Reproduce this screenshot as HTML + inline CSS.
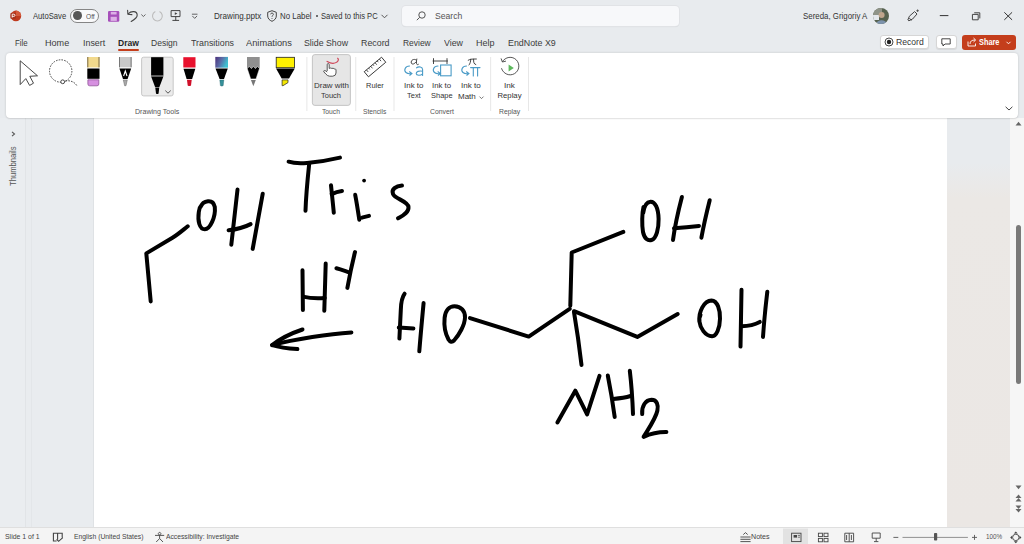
<!DOCTYPE html>
<html><head><meta charset="utf-8">
<style>
*{box-sizing:border-box;margin:0;padding:0}
html,body{width:1024px;height:544px;overflow:hidden;background:#e8ebee;font-family:"Liberation Sans",sans-serif;color:#262626}
.a{position:absolute;white-space:nowrap}
svg{position:absolute;overflow:visible}
</style></head><body>
<div class="a" style="left:0;top:0;width:1024px;height:52px;background:#e8ebee"></div>
<svg style="left:0;top:0" width="30" height="30" viewBox="0 0 30 30">
<circle cx="15.9" cy="15.9" r="5.3" fill="#bf3a1e"/>
<path d="M15.9 10.6 A5.3 5.3 0 0 1 21.2 15.9 L15.9 15.9Z" fill="#d45a3a"/>
<rect x="10.4" y="13" width="5.6" height="5.8" rx="0.8" fill="#a8321a"/>
<path d="M12.2 17.6 V14.2 H13.8 Q15 14.2 15 15.3 Q15 16.4 13.8 16.4 H12.2" fill="none" stroke="#fff" stroke-width="0.9"/>
</svg>
<div class="a" style="left:32.80px;top:12px;font-size:8.57px;line-height:1;color:#333;font-weight:400;transform:scaleX(0.893);transform-origin:0 0;">AutoSave</div>
<div class="a" style="left:70.4px;top:8.9px;width:28.5px;height:13.8px;border:1px solid #858585;border-radius:7px;background:#f9f9fa"></div>
<div class="a" style="left:73px;top:11.3px;width:8.8px;height:8.8px;border-radius:50%;background:#575757"></div>
<div class="a" style="left:85.80px;top:13px;font-size:7.86px;line-height:1;color:#555;font-weight:400;transform:scaleX(0.841);transform-origin:0 0;">Off</div>
<svg style="left:107.7px;top:10.7px" width="11.3" height="10.8" viewBox="0 0 11.3 10.8">
<rect x="0" y="0" width="11.3" height="10.8" rx="1.2" fill="#a64fba"/>
<rect x="2.8" y="0.9" width="5.8" height="2.6" fill="#dcb0e6"/>
<rect x="2.6" y="5.8" width="6.2" height="4.1" fill="#dcb0e6"/>
</svg>
<svg style="left:0;top:0" width="210" height="30" viewBox="0 0 210 30" fill="none" stroke-linecap="round" stroke-linejoin="round">
<path d="M128.2 13.8 C131 10.8 137 10.6 137.2 15 C137.3 17.6 134.5 19.6 131.2 21.4" stroke="#444" stroke-width="1.1"/>
<path d="M127.6 10.2 L127.9 14.3 L131.9 14.6" stroke="#444" stroke-width="1.1"/>
<path d="M141.6 14.8 L143.4 16.5 L145.2 14.8" stroke="#555" stroke-width="0.9"/>
<path d="M155 11.8 A4.9 4.9 0 1 0 159.8 11.8" stroke="#bdbdbd" stroke-width="1.1"/>
<path d="M171.5 10.6 H180 V16.6 H171.5 Z M175.75 16.6 V20.3 M172.8 20.4 H178.7" stroke="#444" stroke-width="1"/>
<path d="M174.8 12.2 L177.4 13.6 L174.8 15 Z" fill="#444" stroke="none"/>
<path d="M192.3 14.2 H197.1 M192.6 16.2 L194.7 18.4 L196.8 16.2" stroke="#555" stroke-width="0.9"/>
</svg>
<div class="a" style="left:213.70px;top:12px;font-size:8.43px;line-height:1;color:#333;font-weight:400;transform:scaleX(0.961);transform-origin:0 0;">Drawing.pptx</div>
<svg style="left:266.5px;top:9.5px" width="10" height="12" viewBox="0 0 10 12" fill="none" stroke="#444" stroke-width="1">
<path d="M5 0.7 L9.3 2.3 V6 C9.3 8.6 7.4 10.3 5 11.3 C2.6 10.3 0.7 8.6 0.7 6 V2.3Z"/><path d="M3.6 4.3 C3.6 2.6 6.4 2.6 6.4 4.3 C6.4 5.4 5 5.4 5 6.8" stroke-width="0.9"/><circle cx="5" cy="8.4" r="0.5" fill="#444" stroke="none"/></svg>
<div class="a" style="left:279.70px;top:12px;font-size:8.43px;line-height:1;color:#333;font-weight:400;transform:scaleX(0.936);transform-origin:0 0;">No Label</div>
<div class="a" style="left:315.5px;top:15px;width:2px;height:2px;border-radius:1px;background:#444"></div>
<div class="a" style="left:321.00px;top:12px;font-size:8.43px;line-height:1;color:#333;font-weight:400;transform:scaleX(0.903);transform-origin:0 0;">Saved to this PC</div>
<svg style="left:380.5px;top:13.5px" width="7" height="5" viewBox="0 0 7 5" fill="none" stroke="#555" stroke-width="1"><path d="M0.5 0.8 L3.5 3.8 L6.5 0.8"/></svg>
<div class="a" style="left:402px;top:6px;width:276.5px;height:20px;background:#f7f8fa;border-radius:4px;box-shadow:0 0 0 1px #e1e3e6, 0 1px 1px rgba(0,0,0,0.10)"></div>
<svg style="left:416px;top:10.5px" width="10" height="10" viewBox="0 0 10 10" fill="none" stroke="#555" stroke-width="1"><circle cx="6" cy="4" r="3.2"/><path d="M3.7 6.3 L0.8 9.2"/></svg>
<div class="a" style="left:434.50px;top:12px;font-size:8.57px;line-height:1;color:#555;font-weight:400;transform:scaleX(1.005);transform-origin:0 0;">Search</div>
<div class="a" style="left:803.30px;top:12px;font-size:8.43px;line-height:1;color:#333;font-weight:400;transform:scaleX(0.935);transform-origin:0 0;">Sereda, Grigoriy A</div>
<svg style="left:872.8px;top:7.5px" width="16" height="16" viewBox="0 0 16 16">
<defs><clipPath id="av"><circle cx="8" cy="8" r="8"/></clipPath></defs>
<g clip-path="url(#av)"><rect width="16" height="16" fill="#56624f"/><rect x="0" y="0" width="9" height="9" fill="#8f9488"/><rect x="0" y="7" width="6" height="5" fill="#e4e8ec"/><circle cx="8.6" cy="7" r="3" fill="#bfa58c"/><path d="M3 16 C4 11 13 11 14 16Z" fill="#7d93ad"/></g></svg>
<svg style="left:0;top:0" width="1024" height="30" viewBox="0 0 1024 30" fill="none" stroke-linecap="round" stroke-linejoin="round">
<path d="M908 19.6 L909.4 16.2 L914.6 11.6 L917 14 L912.6 19 L909.2 20.6 Z M909.6 18.6 L911.4 20" stroke="#444" stroke-width="1"/>
<path d="M917.6 9.8 V11.6 M916.7 10.7 H918.5" stroke="#444" stroke-width="0.8"/>
<path d="M940.2 15.6 H948" stroke="#333" stroke-width="1"/>
<path d="M972.8 14.4 H978.2 V19.8 H972.8 Z" stroke="#444" stroke-width="1"/>
<path d="M974.6 12.8 H979.8 V18" stroke="#444" stroke-width="1"/>
<path d="M1004.6 12.6 L1011.8 19.6 M1011.8 12.6 L1004.6 19.6" stroke="#333" stroke-width="1"/>
</svg>
<div class="a" style="left:14.60px;top:39px;font-size:9.00px;line-height:1;color:#3b3b3b;font-weight:400;transform:scaleX(0.876);transform-origin:0 0;">File</div>
<div class="a" style="left:45.00px;top:39px;font-size:9.00px;line-height:1;color:#3b3b3b;font-weight:400;transform:scaleX(1.008);transform-origin:0 0;">Home</div>
<div class="a" style="left:82.50px;top:39px;font-size:9.00px;line-height:1;color:#3b3b3b;font-weight:400;transform:scaleX(0.986);transform-origin:0 0;">Insert</div>
<div class="a" style="left:151.40px;top:39px;font-size:9.00px;line-height:1;color:#3b3b3b;font-weight:400;transform:scaleX(0.949);transform-origin:0 0;">Design</div>
<div class="a" style="left:191.30px;top:39px;font-size:9.00px;line-height:1;color:#3b3b3b;font-weight:400;transform:scaleX(0.984);transform-origin:0 0;">Transitions</div>
<div class="a" style="left:246.40px;top:39px;font-size:9.00px;line-height:1;color:#3b3b3b;font-weight:400;transform:scaleX(1.031);transform-origin:0 0;">Animations</div>
<div class="a" style="left:304.40px;top:39px;font-size:9.00px;line-height:1;color:#3b3b3b;font-weight:400;transform:scaleX(0.977);transform-origin:0 0;">Slide Show</div>
<div class="a" style="left:361.00px;top:39px;font-size:9.00px;line-height:1;color:#3b3b3b;font-weight:400;transform:scaleX(0.982);transform-origin:0 0;">Record</div>
<div class="a" style="left:402.80px;top:39px;font-size:9.00px;line-height:1;color:#3b3b3b;font-weight:400;transform:scaleX(0.939);transform-origin:0 0;">Review</div>
<div class="a" style="left:443.80px;top:39px;font-size:9.00px;line-height:1;color:#3b3b3b;font-weight:400;transform:scaleX(0.982);transform-origin:0 0;">View</div>
<div class="a" style="left:475.50px;top:39px;font-size:9.00px;line-height:1;color:#3b3b3b;font-weight:400;transform:scaleX(0.999);transform-origin:0 0;">Help</div>
<div class="a" style="left:507.70px;top:39px;font-size:9.00px;line-height:1;color:#3b3b3b;font-weight:400;transform:scaleX(0.985);transform-origin:0 0;">EndNote X9</div>
<div class="a" style="left:117.80px;top:39px;font-size:9.00px;line-height:1;color:#262626;font-weight:700;transform:scaleX(0.950);transform-origin:0 0;">Draw</div>
<div class="a" style="left:117.5px;top:48.5px;width:21.5px;height:2px;background:#c43e1c;border-radius:1px"></div>
<div class="a" style="left:880px;top:35px;width:49px;height:13.5px;background:#fff;border:1px solid #d6d6d6;border-radius:3px;box-shadow:0 1px 1px rgba(0,0,0,0.08)"></div>
<svg style="left:884px;top:37px" width="10" height="10" viewBox="0 0 10 10"><circle cx="5" cy="5" r="4" fill="none" stroke="#333" stroke-width="0.9"/><circle cx="5" cy="5" r="2.2" fill="#222"/></svg>
<div class="a" style="left:895.60px;top:38px;font-size:8.86px;line-height:1;color:#333;font-weight:400;transform:scaleX(0.973);transform-origin:0 0;">Record</div>
<div class="a" style="left:935.5px;top:35px;width:21px;height:13.5px;background:#fff;border:1px solid #d6d6d6;border-radius:3px;box-shadow:0 1px 1px rgba(0,0,0,0.08)"></div>
<svg style="left:941px;top:37.5px" width="10" height="9" viewBox="0 0 10 9" fill="none" stroke="#333" stroke-width="0.9"><path d="M0.8 0.8 H9.2 V6 H4 L2 8 V6 H0.8Z"/></svg>
<div class="a" style="left:962px;top:34.5px;width:54px;height:15px;background:#c43e1c;border-radius:3px"></div>
<svg style="left:966.5px;top:37px" width="10" height="10" viewBox="0 0 10 10" fill="none" stroke="#fff" stroke-width="0.9"><path d="M1 4.5 V9 H8.5 V6.5"/><path d="M3 7 C3 4 5 3 8 3"/><path d="M6.5 1 L8.7 3 L6.5 5"/></svg>
<div class="a" style="left:978.50px;top:38px;font-size:8.86px;line-height:1;color:#fff;font-weight:700;transform:scaleX(0.832);transform-origin:0 0;">Share</div>
<svg style="left:1006px;top:40.5px" width="5" height="4" viewBox="0 0 5 4" fill="none" stroke="#fff" stroke-width="0.9"><path d="M0.5 0.8 L2.5 2.8 L4.5 0.8"/></svg>
<div class="a" style="left:0;top:118px;width:26px;height:410px;background:#eaedf0"></div>
<div class="a" style="left:25px;top:118px;width:1px;height:410px;background:#e1e4e7"></div>
<div class="a" style="left:26px;top:118px;width:68px;height:410px;background:#e9ecef"></div>
<div class="a" style="left:31px;top:118px;width:1px;height:410px;background:#e3e6e9"></div>
<div class="a" style="left:93px;top:118px;width:1px;height:410px;background:#dfe2e5"></div>
<svg style="left:10.5px;top:130.5px" width="5" height="6" viewBox="0 0 5 6" fill="none" stroke="#555" stroke-width="1.1"><path d="M1 0.8 L3.5 3 L1 5.2"/></svg>
<div class="a" style="left:9.9px;top:185.6px;font-size:8.2px;line-height:1;color:#555;transform:rotate(-90deg) scaleX(0.934);transform-origin:0 0">Thumbnails</div>
<div class="a" style="left:94px;top:118px;width:853px;height:410px;background:#fff"></div>
<div class="a" style="left:947px;top:118px;width:63px;height:410px;background:linear-gradient(#e8ebee 0px,#e8ebee 45px,#ebe8e5 80px,#ebe7e4 410px)"></div>
<div class="a" style="left:1010px;top:118px;width:14px;height:410px;background:#f6f6f6"></div>
<div class="a" style="left:1015.5px;top:225px;width:5.5px;height:159px;background:#7a7a7a;border-radius:3px"></div>
<svg style="left:1015px;top:121px" width="7" height="5" viewBox="0 0 7 5"><path d="M0.5 4.5 L3.5 0.8 L6.5 4.5Z" fill="#666"/></svg>
<svg style="left:1015px;top:485px" width="7" height="5" viewBox="0 0 7 5"><path d="M0.5 0.5 L3.5 4.2 L6.5 0.5Z" fill="#666"/></svg>
<svg style="left:1015px;top:494px" width="7" height="8" viewBox="0 0 7 8" fill="#666"><path d="M0.5 4 L3.5 0.5 L6.5 4Z"/><path d="M0.5 7.5 L3.5 4 L6.5 7.5Z"/></svg>
<svg style="left:1015px;top:505px" width="7" height="8" viewBox="0 0 7 8" fill="#666"><path d="M0.5 0.5 L3.5 4 L6.5 0.5Z"/><path d="M0.5 4 L3.5 7.5 L6.5 4Z"/></svg>
<div class="a" style="left:6px;top:52.5px;width:1012px;height:65px;background:#fff;border-radius:4px;box-shadow:0 0 2.5px rgba(0,0,0,0.16), 0 1px 1px rgba(0,0,0,0.06)"></div>
<svg style="left:0;top:0" width="1024" height="120" viewBox="0 0 1024 120">
<path d="M20.2 60.8 L37.5 75.8 L29.8 76.3 L33.5 83.2 L29.6 85.4 L25.8 78.6 L20.2 84.6 Z" fill="#fff" stroke="#333" stroke-width="0.9" stroke-linejoin="miter"/>
<circle cx="60.7" cy="71" r="11.2" fill="none" stroke="#333" stroke-width="0.9" stroke-dasharray="1.6 1.2"/>
<circle cx="62.7" cy="81.8" r="1.9" fill="#fff" stroke="#333" stroke-width="0.9"/>
<path d="M65.5 81 C70 80 75 82 77 86" fill="none" stroke="#333" stroke-width="0.9" stroke-dasharray="1.6 1.2"/>
<!-- eraser -->
<rect x="87.3" y="57" width="12.2" height="10.4" fill="#f2d98c"/>
<rect x="87.3" y="57" width="1" height="10.4" fill="#7a6a45"/><rect x="98.5" y="57" width="1" height="10.4" fill="#7a6a45"/>
<rect x="87.3" y="68.5" width="12.2" height="10.3" fill="#000"/>
<path d="M87.9 79.8 H98.8 V84 Q98.8 85.8 97 85.8 H89.7 Q87.9 85.8 87.9 84 Z" fill="#d690e0" stroke="#8f5498" stroke-width="0.8"/>
<!-- gray A pen -->
<rect x="119" y="57" width="12.6" height="10.3" fill="#c9c9c9"/>
<rect x="119" y="57" width="1" height="10.3" fill="#777"/><rect x="130.6" y="57" width="1" height="10.3" fill="#777"/>
<path d="M119.4 68.5 H131.2 L127.6 79.1 H123 Z" fill="#000"/>
<path d="M123.6 76 L125.3 71 L127 76" fill="none" stroke="#fff" stroke-width="1.1"/>
<path d="M123.3 79.9 H127.3 L126 85.7 H124.6 Z" fill="#a8a8a8" stroke="#666" stroke-width="0.5"/>
<!-- selected pen button -->
<rect x="141.6" y="57.2" width="31.6" height="38.7" rx="2" fill="#ebebeb" stroke="#c2c2c2" stroke-width="0.9"/>
<rect x="151.1" y="57.2" width="12.3" height="18.5" fill="#000"/>
<rect x="151.1" y="75.7" width="12.3" height="0.8" fill="#999"/>
<path d="M151.1 76.6 H163.4 L159.2 87.4 H155.3 Z" fill="#000"/>
<path d="M155.3 88 H159.2 L158.6 93.6 Q157.3 94.6 156 93.6 Z" fill="#000"/>
<path d="M165.3 90.6 L168 93.2 L170.7 90.6" fill="none" stroke="#444" stroke-width="0.9"/>
<!-- red pen -->
<rect x="183.3" y="57.2" width="12.2" height="10.3" fill="#e8112d"/>
<path d="M183.5 68.8 H195.3 L192.1 79 H186.6 Z" fill="#000"/>
<path d="M187 79.8 H191.7 L191 85.4 Q189.3 86.6 187.7 85.4 Z" fill="#d0102a"/>
<!-- galaxy pen -->
<defs><linearGradient id="gx" x1="0" y1="0" x2="1" y2="0.4"><stop offset="0" stop-color="#4b2f7a"/><stop offset="0.5" stop-color="#5b6aa6"/><stop offset="1" stop-color="#3fc0d0"/></linearGradient>
<linearGradient id="hl" x1="0" y1="0" x2="0" y2="1"><stop offset="0" stop-color="#fff200"/><stop offset="1" stop-color="#f2e400"/></linearGradient></defs>
<rect x="215.3" y="56.9" width="12.7" height="10.8" fill="url(#gx)"/>
<path d="M215.5 68.6 H227.8 L224 78.9 H219.6 Z" fill="#000"/>
<path d="M219.8 79.9 H223.8 L223.2 85.6 Q221.7 86.6 220.4 85.6 Z" fill="#35909a" stroke="#1d5e66" stroke-width="0.4"/>
<!-- pencil -->
<rect x="247" y="57" width="12.7" height="11" fill="#8f8f8f"/>
<path d="M247.2 68.4 L249.3 66.6 L251.4 68.4 L253.4 66.6 L255.4 68.4 L257.5 66.6 L259.5 68.4 L256 78.9 H250.7 Z" fill="#000" stroke="#fff" stroke-width="0.5"/>
<path d="M250.9 79.9 H255.8 L253.35 86.2 Z" fill="#777"/>
<!-- highlighter -->
<rect x="276.2" y="57.3" width="18.3" height="10.4" fill="#fff100" stroke="#222" stroke-width="0.8"/>
<path d="M276 68.6 H294.8 L289 78.4 H281.7 Z" fill="#000"/>
<path d="M282.1 79.9 H288 V82.6 L283 85.7 H282.1 Z" fill="#f3e600" stroke="#222" stroke-width="0.7"/>
<!-- separators -->
<rect x="306.5" y="57" width="0.8" height="54" fill="#e1e1e1"/>
<rect x="355.4" y="57" width="0.8" height="54" fill="#e1e1e1"/>
<rect x="393.6" y="57" width="0.8" height="54" fill="#e1e1e1"/>
<rect x="490.3" y="57" width="0.8" height="54" fill="#e1e1e1"/>
<rect x="528" y="57" width="0.8" height="54" fill="#e1e1e1"/>
<!-- touch button -->
<rect x="312.4" y="54.6" width="38" height="50.8" rx="2.5" fill="#e6e6e6" stroke="#c0c0c0" stroke-width="0.9"/>
<path d="M326.6 61.2 C329 62.5 331 63.6 333 63.4 C336 63 338.2 61.5 338.4 59.8 C338.5 59 338 58.4 337.3 58.1" fill="none" stroke="#d04a5c" stroke-width="1.2"/>
<path d="M327.2 71 V64.6 Q327.2 63.6 328.2 63.6 Q329.2 63.6 329.2 64.6 V68.4 Q330.8 67.6 331.8 68.4 Q333.4 67.9 334.2 68.9 Q335.8 68.6 336 69.8 V73 Q336 75.8 332.8 76.2 H329.6 Q327.5 76 326 74.2 L323.8 71.8 Q323.4 70.6 324.6 70.5 Q325.8 70.6 327.2 72" fill="#fff" stroke="#444" stroke-width="0.9"/>
<!-- ruler -->
<g transform="translate(375 67) rotate(-40)">
<rect x="-11.3" y="-3.3" width="22.6" height="6.6" fill="none" stroke="#333" stroke-width="0.9"/>
<path d="M-8.4 -3.3 V-0.6 M-5.6 -3.3 V-1.6 M-2.8 -3.3 V-0.6 M0 -3.3 V-1.6 M2.8 -3.3 V-0.6 M5.6 -3.3 V-1.6 M8.4 -3.3 V-0.6" stroke="#333" stroke-width="0.8"/>
</g>
<!-- ink to text -->
<g fill="none" stroke-linecap="round">
<path d="M416.4 60.2 C415.2 58.8 411.6 59 411.2 62 C410.9 64.4 413.8 65 415.6 62.4 M416.8 59 C416.4 61 416.2 63.4 416.8 64.2 C417.2 64.8 417.9 64.8 418.4 64.4" stroke="#333" stroke-width="0.9"/>
<path d="M409.5 66 C405 66 403.6 70.5 406 72.5 C407.4 73.8 409.5 74 411.8 73.6 M409.5 71.8 L411.9 73.6 L409.8 75.2" stroke="#4a9bc7" stroke-width="1.1"/>
<path d="M416.6 67.8 C418.5 66.3 422.6 66.6 422.6 69.6 V75.4 M422.6 71.2 C419 70.5 416 71.6 416.2 73.6 C416.4 75.8 420.6 75.8 422.6 73.8" stroke="#4a9bc7" stroke-width="1.1"/>
<!-- ink to shape -->
<path d="M433 61 H447.5 M433.5 58.6 V63.6 M447 58.6 V63.6" stroke="#333" stroke-width="0.9"/>
<path d="M438 66 C433.5 66 432.1 70.5 434.5 72.5 C435.9 73.8 438 74 440.3 73.6 M438 71.8 L440.4 73.6 L438.3 75.2" stroke="#4a9bc7" stroke-width="1.1"/>
<rect x="440.6" y="65" width="10.5" height="10.8" stroke="#4a9bc7" stroke-width="1.1"/>
<!-- ink to math -->
<path d="M468.2 60.2 C470 59 473 59 476.4 59 M470.8 59.2 C470.6 62 470 64 469 65 M473.6 59.2 C473.4 62 473.8 64.2 475.8 64.6" stroke="#333" stroke-width="0.9"/>
<path d="M466.5 66 C462 66 460.6 70.5 463 72.5 C464.4 73.8 466.5 74 468.8 73.6 M466.5 71.8 L468.9 73.6 L466.8 75.2" stroke="#4a9bc7" stroke-width="1.1"/>
<path d="M470.6 67.6 H480 M473.3 67.6 V76 M477.6 67.6 V76" stroke="#4a9bc7" stroke-width="1.1"/>
<!-- replay -->
<path d="M502.5 61.5 A8.8 8.8 0 1 1 501.6 68.6" stroke="#444" stroke-width="0.9"/>
<path d="M501.2 58.8 L502.4 62 L505.6 61.2" stroke="#444" stroke-width="0.9"/>
</g>
<path d="M508.6 64.6 L513.8 68 L508.6 71.4 Z" fill="#5cb85c"/>
</svg>
<div class="a" style="left:134.90px;top:109px;font-size:6.86px;line-height:1;color:#555;font-weight:400;transform:scaleX(1.031);transform-origin:0 0;">Drawing Tools</div>
<div class="a" style="left:313.80px;top:82px;font-size:7.43px;line-height:1;color:#333;font-weight:400;transform:scaleX(1.073);transform-origin:0 0;">Draw with</div>
<div class="a" style="left:321.00px;top:92px;font-size:7.71px;line-height:1;color:#333;font-weight:400;transform:scaleX(0.972);transform-origin:0 0;">Touch</div>
<div class="a" style="left:322.00px;top:109px;font-size:6.86px;line-height:1;color:#555;font-weight:400;transform:scaleX(0.983);transform-origin:0 0;">Touch</div>
<div class="a" style="left:366.00px;top:82px;font-size:7.43px;line-height:1;color:#333;font-weight:400;transform:scaleX(1.003);transform-origin:0 0;">Ruler</div>
<div class="a" style="left:363.00px;top:109px;font-size:6.86px;line-height:1;color:#555;font-weight:400;transform:scaleX(0.970);transform-origin:0 0;">Stencils</div>
<div class="a" style="left:403.50px;top:82px;font-size:7.43px;line-height:1;color:#333;font-weight:400;transform:scaleX(1.073);transform-origin:0 0;">Ink to</div>
<div class="a" style="left:406.60px;top:92px;font-size:7.71px;line-height:1;color:#333;font-weight:400;transform:scaleX(0.969);transform-origin:0 0;">Text</div>
<div class="a" style="left:431.90px;top:82px;font-size:7.43px;line-height:1;color:#333;font-weight:400;transform:scaleX(1.051);transform-origin:0 0;">Ink to</div>
<div class="a" style="left:430.80px;top:92px;font-size:7.71px;line-height:1;color:#333;font-weight:400;transform:scaleX(0.969);transform-origin:0 0;">Shape</div>
<div class="a" style="left:461.30px;top:82px;font-size:7.43px;line-height:1;color:#333;font-weight:400;transform:scaleX(1.090);transform-origin:0 0;">Ink to</div>
<div class="a" style="left:458.20px;top:93px;font-size:7.71px;line-height:1;color:#333;font-weight:400;transform:scaleX(1.038);transform-origin:0 0;">Math</div>
<svg style="left:478.5px;top:95.5px" width="5" height="4" viewBox="0 0 5 4" fill="none" stroke="#555" stroke-width="0.8"><path d="M0.5 0.6 L2.5 2.6 L4.5 0.6"/></svg>
<div class="a" style="left:429.90px;top:109px;font-size:6.86px;line-height:1;color:#555;font-weight:400;transform:scaleX(0.995);transform-origin:0 0;">Convert</div>
<div class="a" style="left:504.40px;top:82px;font-size:7.43px;line-height:1;color:#333;font-weight:400;transform:scaleX(1.100);transform-origin:0 0;">Ink</div>
<div class="a" style="left:497.50px;top:92px;font-size:7.71px;line-height:1;color:#333;font-weight:400;transform:scaleX(1.000);transform-origin:0 0;">Replay</div>
<div class="a" style="left:498.90px;top:109px;font-size:6.86px;line-height:1;color:#555;font-weight:400;transform:scaleX(0.993);transform-origin:0 0;">Replay</div>
<svg style="left:1005px;top:105.5px" width="8" height="5" viewBox="0 0 8 5" fill="none" stroke="#444" stroke-width="1"><path d="M0.6 0.8 L4 4 L7.4 0.8"/></svg>
<svg style="left:0;top:0" width="1024" height="544" viewBox="0 0 1024 544">
<g fill="none" stroke="#000" stroke-width="4.0" stroke-linecap="round" stroke-linejoin="round">
<!-- left bracket + OH -->
<path d="M150.7 301.4 L146.3 253.4 L172.5 237.7 C178 234.5 183 230 187.7 226.3"/>
<path d="M200.5 207 C203 200.5 213 198 214.8 207 C215.8 217 210 229.3 204.8 229.3 C199.5 229.3 197.5 221 198.8 212 C199.2 209 200.5 206 202 204.5"/>
<path d="M237.5 189.6 L231.3 244.7"/>
<path d="M228.6 230.3 C236 229.5 244 227.5 250.6 224.1"/>
<path d="M262.7 193.8 L252.7 248.9"/>
<!-- Tris -->
<path d="M288.6 161.7 C294 163.5 300 163.5 307 163 C318 162 330 160 340 157.6"/>
<path d="M309.2 163.8 C307.5 180 306 195 305.5 210.7"/>
<path d="M331 185.2 C332 195 333 204 333.8 212.8"/>
<path d="M331.7 194.1 C335 192.5 338.5 191.5 342 191.1"/>
<path d="M355.2 194.8 C356.8 203 358 211 359.3 219.7"/>
<path d="M362.1 217.6 C364.5 217 366.8 216.4 369 215.9"/>
<path d="M402 185.6 C396 186 391 189 393 194 C395 199 408 201 408.5 207 C409 213 402 216 398 218.3"/>
<!-- HY -->
<path d="M302.5 270.3 L302.9 310.1"/>
<path d="M302.9 296.6 C310 298.3 317 298.6 324.7 298"/>
<path d="M325.7 263.6 L324.3 310.7"/>
<path d="M336.4 268.3 C341 269.5 345 271 349 272.3"/>
<path d="M355 252.1 C352 264 349.5 276 347.4 287.9"/>
<!-- arrow -->
<path d="M351.4 332.4 C330 334 295 339 272.1 345.1"/>
<path d="M302.5 329.5 C292 333 280 339 272.1 345.1 C280 347.5 289 348.5 297.4 349.1"/>
<!-- HO -->
<path d="M404.6 293.7 C402 297 401 302 400.8 310 C400.4 320 399.8 330 399.4 338.6"/>
<path d="M398.8 327.5 L413.4 328.4"/>
<path d="M423.6 303 C422 320 420.5 336 419.3 351.3"/>
<path d="M454.5 306.2 C461 306.2 465.2 311 465 317.5 C464.8 325 459 335 454 340.5 C452 342.5 450 342 448.5 339.5 C445 333 443.8 326 444.6 318 C445.4 310 449.5 306.2 454.5 306.2 Z"/>
<!-- skeleton -->
<path d="M470 318.1 L528.7 336.6 L569.7 308.9"/>
<path d="M623.3 231.9 L571.7 252.5 L570.3 305.8"/>
<path d="M574 311.2 L637.3 336.9 L677.7 314"/>
<path d="M574 312.2 C577 330 579.5 348 581.5 364.9"/>
<!-- top OH -->
<path d="M643.5 207 C642 213 641.8 225 643 232 C644.5 239 648 241 651.5 240 C656.5 238.5 658.8 228 658.6 219 C658.4 208 655 201.5 650.5 201.7 C646.5 202 644 207 643.2 213"/>
<path d="M681.9 197 C678.5 210 675 225 673 240"/>
<path d="M674 228.3 C682 227.5 691 226.8 699 226"/>
<path d="M709.7 200.2 C706.5 213 703.5 226 701.4 237.7"/>
<!-- right OH -->
<path d="M699.5 321 C698.5 312 704 300.5 711.5 300.4 C717.5 300.5 720.2 310 720 318.7 C719.8 328 716.5 336.5 712 336.3 C705 336 700.2 328 699.3 321 C699 319 699.5 317 700.5 315"/>
<path d="M741.5 289.7 C741 308 740.7 327 740.5 346.6"/>
<path d="M741.5 326.2 C748 326 754 325 759.8 321.9"/>
<path d="M767.3 291.8 C765.5 307 764 322 763 336.9"/>
<!-- NH2 -->
<path d="M557.4 422.4 L575.3 390.7 L587.1 414.4 L599.5 375.8"/>
<path d="M607.8 375.5 C610.5 389 612.8 403 614.7 416.9"/>
<path d="M613.3 399 C619 398.5 625 397.8 630.5 396"/>
<path d="M629.8 370.7 C631.5 385 632.5 400 633 414.1"/>
<path d="M642.2 414.1 C641.5 406 645.5 400 651.5 399.8 C657 399.8 658.5 405 657.4 410.5 C656 418 649 428 643.6 436.9 C650 434 658 432 666.4 432.1"/>
</g>
<circle cx="364.1" cy="180.6" r="1.9" fill="#000"/>
</svg>
<div class="a" style="left:0;top:527px;width:1024px;height:17px;background:#f4f4f4;border-top:1px solid #dfdfdf"></div>
<div class="a" style="left:5.30px;top:534px;font-size:7.14px;line-height:1;color:#444;font-weight:400;transform:scaleX(0.971);transform-origin:0 0;">Slide 1 of 1</div>
<svg style="left:0;top:0" width="1024" height="544" viewBox="0 0 1024 544">
<g fill="none" stroke="#444" stroke-width="0.9">
<path d="M62.2 537.6 V533.2 H53.4 V541 H56.6 M57.6 533.2 V539.6 M56.6 539.4 L58.6 541.3 L62.8 537.6" stroke-width="1.1"/>
<!-- accessibility -->
<path d="M159.6 532.4 A1.3 1.3 0 1 1 159.59 532.4 M155 535.4 H164.2 M159.6 535.4 V538.5 L156.2 542 M159.6 538.5 L163 542"/>
<!-- notes -->
<path d="M740.4 537 H750.6 M740.4 539.3 H750.6 M740.4 541.6 H750.6 M743.3 534.6 L745.5 532.6 L747.7 534.6"/>
<!-- slide sorter -->
<rect x="818.4" y="533.2" width="4" height="3.4"/><rect x="824" y="533.2" width="4" height="3.4"/>
<rect x="818.4" y="538.4" width="4" height="3.4"/><rect x="824" y="538.4" width="4" height="3.4"/>
<!-- reading -->
<path d="M844.8 533.2 H853.6 V541.8 H844.8 Z M849.2 533.2 V541.8 M846.6 535 V540 M851.4 535 V540"/>
<!-- slideshow -->
<path d="M872.2 533 H880.2 V538.2 H872.2 Z M876.2 538.2 V541.4 M874 541.6 H878.4"/>
<!-- fit -->
<path d="M1012.6 537.4 A3.2 3.2 0 1 0 1019 537.4 A3.2 3.2 0 1 0 1012.6 537.4"/>
</g>
<rect x="783" y="528.6" width="25" height="15.4" fill="#e2e2e2"/>
<g fill="none" stroke="#444" stroke-width="0.9">
<rect x="791.6" y="533.2" width="9.4" height="8.4"/>
</g>
<rect x="793.6" y="535" width="3.4" height="2.6" fill="#444"/>
<path d="M797.8 535.4 H800 M797.8 537.2 H800" stroke="#444" stroke-width="0.7"/>
<path d="M1015.8 531.6 L1013.8 533.6 H1017.8 Z M1015.8 543.2 L1013.8 541.2 H1017.8 Z M1010.2 537.4 L1012.2 535.4 V539.4 Z M1021.4 537.4 L1019.4 535.4 V539.4 Z" fill="#444"/>
<path d="M893.4 537.4 H898.3" stroke="#555" stroke-width="0.9"/>
<path d="M902.5 537.4 H967.9" stroke="#777" stroke-width="0.8"/>
<rect x="934" y="533" width="3.2" height="7.6" rx="0.8" fill="#555"/>
<path d="M972 537.4 H977 M974.5 534.9 V539.9" stroke="#555" stroke-width="0.9"/>
</svg>
<div class="a" style="left:74.00px;top:534px;font-size:7.14px;line-height:1;color:#444;font-weight:400;transform:scaleX(0.953);transform-origin:0 0;">English (United States)</div>
<div class="a" style="left:166.40px;top:534px;font-size:7.14px;line-height:1;color:#444;font-weight:400;transform:scaleX(0.947);transform-origin:0 0;">Accessibility: Investigate</div>
<div class="a" style="left:751.30px;top:534px;font-size:7.14px;line-height:1;color:#444;font-weight:400;transform:scaleX(0.997);transform-origin:0 0;">Notes</div>
<div class="a" style="left:986.20px;top:534px;font-size:7.14px;line-height:1;color:#555;font-weight:400;transform:scaleX(0.887);transform-origin:0 0;">100%</div>
</body></html>
